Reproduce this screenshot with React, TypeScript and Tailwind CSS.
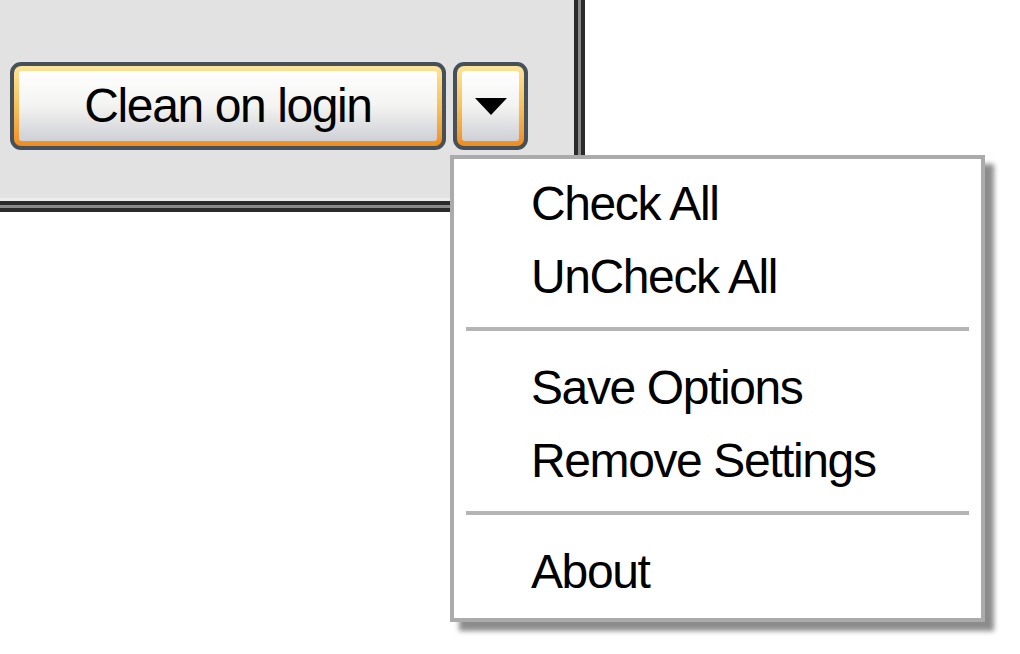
import React from "react";

const font = { fontFamily: '"Liberation Sans", Arial, sans-serif' };

function Separator() {
  return <div className="mx-[12px] mt-[14px] mb-[20px] h-[4px] bg-[#b4b4b4]"></div>;
}

function Item({ label }: { label: string }) {
  return (
    <div className="h-[73px] leading-[73px] pl-[77px] text-[48px] tracking-[-1.4px] text-black whitespace-nowrap">
      {label}
    </div>
  );
}

export default function App() {
  return (
    <div className="relative w-[1020px] h-[654px] bg-white overflow-hidden" style={font}>
      {/* Panel frame (double line on right and bottom) */}
      <div className="w-[585px] h-[212px] border-r-[4px] border-b-[4px] border-[#2b2b2b]">
        <div className="h-full border-r-[3px] border-b-[3px] border-[#8a8a8a]">
          <div className="h-full border-r-[4px] border-b-[4px] border-[#2b2b2b]">
            <div className="h-full bg-[#e2e2e2] border-b-[3px] border-[#ededed] pt-[62px] pl-[10px]">
              <div className="flex gap-[7px]">
                {/* Main button */}
                <button className="w-[436px] h-[88px] rounded-[11px] border-[4px] border-[#46505a] p-[5px] bg-gradient-to-b from-[#fde49a] via-[#f8c15a] to-[#ef8d1c]">
                  <div className="h-full w-full rounded-[3px] bg-gradient-to-b from-white via-[#f3f3f1] to-[#cfd0d6] flex items-center justify-center text-[48px] tracking-[-1.4px] text-black">
                    Clean on login
                  </div>
                </button>
                {/* Dropdown button */}
                <button className="w-[75px] h-[88px] rounded-[11px] border-[4px] border-[#46505a] p-[5px] bg-gradient-to-b from-[#fde49a] via-[#f8c15a] to-[#ef8d1c]">
                  <div className="h-full w-full rounded-[3px] bg-gradient-to-b from-white via-[#f3f3f1] to-[#cfd0d6] flex items-center justify-center">
                    <svg width="32" height="17" viewBox="0 0 32 17">
                      <polygon points="0,0 32,0 16,17" fill="#000" />
                    </svg>
                  </div>
                </button>
              </div>
            </div>
          </div>
        </div>
      </div>

      {/* Dropdown menu */}
      <div className="absolute left-[450px] top-[155px] w-[535px] h-[467px] bg-white border-[4px] border-[#ababab] shadow-[9px_9px_5px_rgba(0,0,0,0.45)] pt-[8px]">
        <Item label="Check All" />
        <Item label="UnCheck All" />
        <Separator />
        <Item label="Save Options" />
        <Item label="Remove Settings" />
        <Separator />
        <Item label="About" />
      </div>
    </div>
  );
}
